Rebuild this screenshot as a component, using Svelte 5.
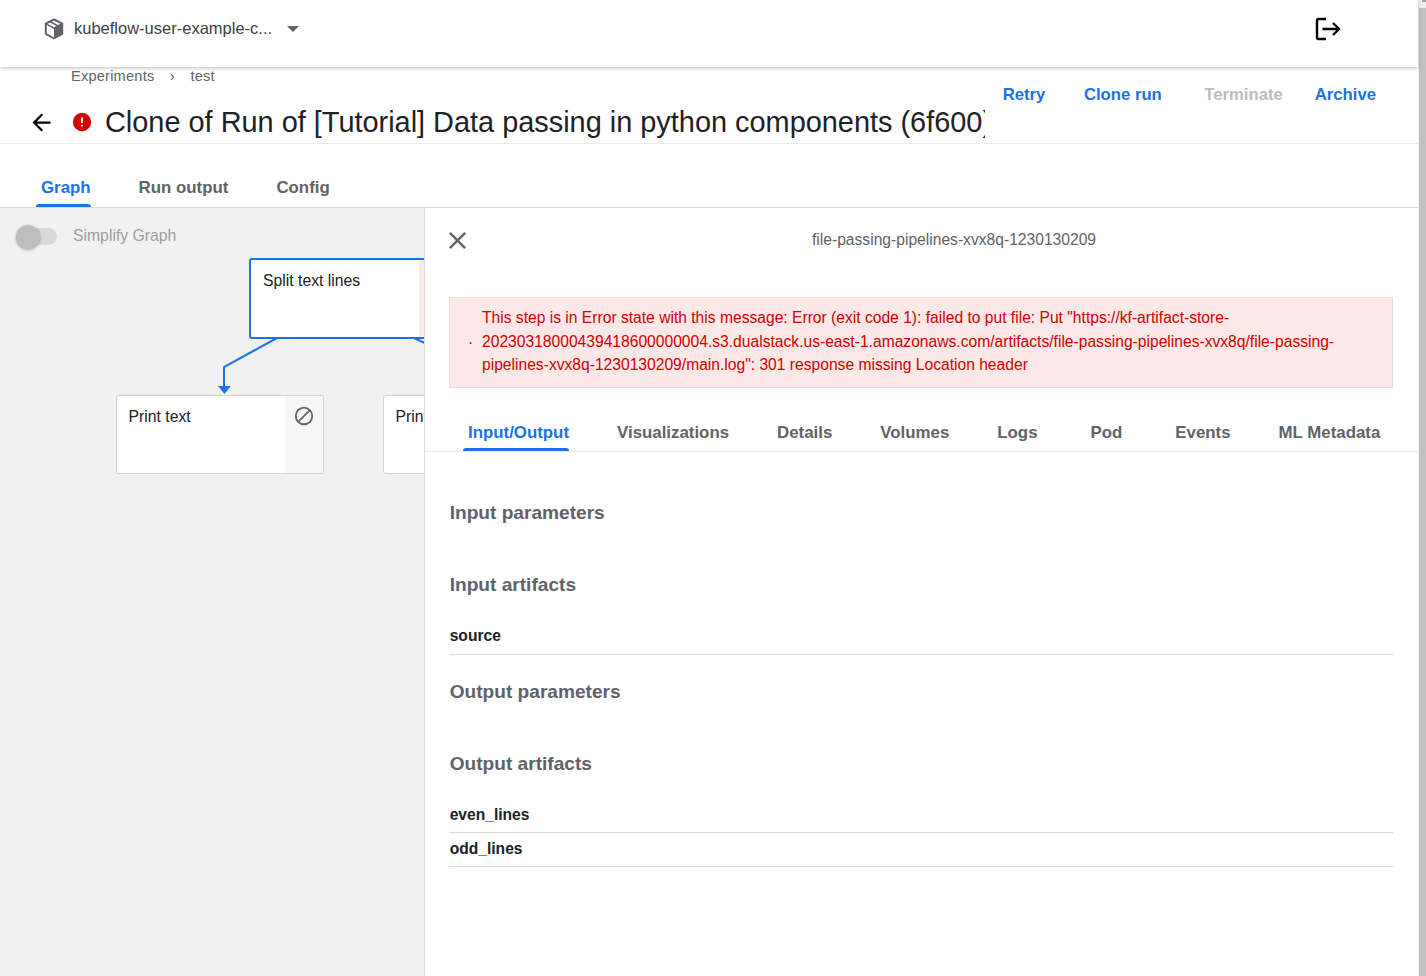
<script>
  const crumbs = ["Experiments", "test"];
  const actions = [
    { label: "Retry" },
    { label: "Clone run" },
    { label: "Terminate", disabled: true },
    { label: "Archive" },
  ];
  const runTabs = ["Graph", "Run output", "Config"];
  const sideTabs = ["Input/Output", "Visualizations", "Details", "Volumes", "Logs", "Pod", "Events", "ML Metadata"];
  const title = "Clone of Run of [Tutorial] Data passing in python components (6f600)";
  const message =
    'This step is in Error state with this message: Error (exit code 1): failed to put file: Put "https://kf-artifact-store-20230318000439418600000004.s3.dualstack.us-east-1.amazonaws.com/artifacts/file-passing-pipelines-xvx8q/file-passing-pipelines-xvx8q-1230130209/main.log": 301 response missing Location header';
</script>

<div class="page">
  <header class="topbar">
    <div class="namespace">
      <svg class="cube" viewBox="0 0 24 24" width="24" height="24">
        <path d="M12 2.500 3.800 6.600v10.200L12 21.500l8.200-4.700V6.600z" fill="none" stroke="#5f6368" stroke-width="2" stroke-linejoin="round" />
        <path d="M12 11.200v10.300l8.200-4.700V6.600z" fill="#5f6368" />
        <path d="M3.800 6.600 12 11.200l8.200-4.600M8 4.600l8.200 4.400v3.400" fill="none" stroke="#5f6368" stroke-width="1.600" />
      </svg>
      <span class="ns-name">kubeflow-user-example-c...</span>
      <span class="caret"></span>
    </div>
    <svg class="logout" viewBox="0 0 26 24" width="26" height="24">
      <path d="M11 2H3.500A1.500 1.500 0 0 0 2 3.500v17A1.500 1.500 0 0 0 3.500 22H11" fill="none" stroke="#000" stroke-width="2.400" />
      <path d="M7.500 12H24M18 6l6 6-6 6" fill="none" stroke="#000" stroke-width="2.400" />
    </svg>
  </header>

  <section class="run-head">
    <div class="head-left">
      <nav class="crumbs">
        {#each crumbs as crumb, i}
          {#if i > 0}<span class="chev">›</span>{/if}
          <span>{crumb}</span>
        {/each}
      </nav>
      <div class="title-row">
        <svg class="back" viewBox="0 0 24 24" width="27" height="27">
          <path d="M20 11H7.830l5.590-5.590L12 4l-8 8 8 8 1.410-1.410L7.830 13H20z" fill="#000" />
        </svg>
        <svg class="status" viewBox="0 0 24 24" width="22" height="22">
          <path d="M12 2a10 10 0 1 0 0 20 10 10 0 0 0 0-20zm1 15h-2v-2h2zm0-4h-2V7h2z" fill="#d50000" />
        </svg>
        <h1>{title}</h1>
      </div>
    </div>
    <div class="actions">
      {#each actions as action}
        <button class="action" class:disabled={action.disabled}>{action.label}</button>
      {/each}
    </div>
  </section>

  <nav class="run-tabs">
    {#each runTabs as tab, i}
      <div class="tab" class:active={i === 0}>{tab}</div>
    {/each}
  </nav>

  <main class="body">
    <section class="graph">
      <div class="simplify">
        <span class="switch"><span class="knob"></span></span>
        <span class="simplify-label">Simplify Graph</span>
      </div>

      <div class="node selected" style="left: 249px; top: 50px; width: 202px; height: 81px;">
        <span class="node-name">Split text lines</span>
        <span class="node-status red"></span>
      </div>
      <div class="node" style="left: 116px; top: 187px; width: 208px; height: 79px;">
        <span class="node-name">Print text</span>
        <span class="node-status">
          <svg viewBox="0 0 24 24" width="22" height="22">
            <path d="M12 2a10 10 0 1 0 0 20 10 10 0 0 0 0-20zM4 12a8 8 0 0 1 12.900-6.300L5.700 16.900A7.900 7.900 0 0 1 4 12zm8 8a7.900 7.900 0 0 1-4.900-1.700L18.300 7.100A8 8 0 0 1 12 20z" fill="#5f6368" />
          </svg>
        </span>
      </div>
      <div class="node" style="left: 383px; top: 187px; width: 208px; height: 79px;">
        <span class="node-name">Print text</span>
      </div>

      <svg class="edges" width="424" height="768" viewBox="0 0 424 768">
        <path d="M277 130 224 159V180" fill="none" stroke="#1a73e8" stroke-width="2" />
        <path d="M218 178H231L224.500 186z" fill="#1a73e8" />
        <path d="M414 130 425 135" fill="none" stroke="#1a73e8" stroke-width="2" />
      </svg>
    </section>

    <aside class="panel">
      <div class="panel-head">
        <svg class="close" viewBox="0 0 24 24" width="29" height="29">
          <path d="M19 6.410 17.590 5 12 10.590 6.410 5 5 6.410 10.590 12 5 17.590 6.410 19 12 13.410 17.590 19 19 17.590 13.410 12z" fill="#5f6368" />
        </svg>
        <span class="node-id">file-passing-pipelines-xvx8q-1230130209</span>
      </div>

      <div class="banner">
        <span class="dot">·</span>
        <p>{message}</p>
      </div>

      <nav class="side-tabs">
        {#each sideTabs as tab, i}
          <div class="tab" class:active={i === 0}>{tab}</div>
        {/each}
      </nav>

      <div class="io">
        <h2 style="margin-top: 49px;">Input parameters</h2>
        <h2 style="margin-top: 49px;">Input artifacts</h2>
        <div class="io-row tight" style="margin-top: 25px;">source</div>
        <h2 style="margin-top: 25px;">Output parameters</h2>
        <h2 style="margin-top: 49px;">Output artifacts</h2>
        <div class="io-row" style="margin-top: 24px;">even_lines</div>
        <div class="io-row">odd_lines</div>
      </div>
    </aside>
  </main>

  <div class="scrollbar"><span class="arrow"></span><span class="thumb"></span></div>
</div>

<style>
  :global(body) {
    margin: 0;
    overflow: hidden;
    font-family: "Liberation Sans", Arial, sans-serif;
  }

  .page {
    position: relative;
    width: 1426px;
    height: 976px;
    padding-right: 8px;
    box-sizing: border-box;
    background: #fff;
    overflow: hidden;
  }

  .topbar {
    height: 67px;
    display: flex;
    align-items: center;
    justify-content: space-between;
    padding: 0 77px 10px 42px;
    box-sizing: border-box;
    position: relative;
    z-index: 1;
    box-shadow: 0 1px 4px rgba(0, 0, 0, 0.25);
    background: #fff;
  }

  .namespace {
    display: flex;
    align-items: center;
    color: #3c4043;
    font-size: 16.500px;
  }

  .ns-name {
    margin-left: 8px;
  }

  .caret {
    margin-left: 15px;
    border-left: 6.500px solid transparent;
    border-right: 6.500px solid transparent;
    border-top: 6.500px solid #5f6368;
  }

  .run-head {
    height: 77px;
    display: flex;
    justify-content: space-between;
    border-bottom: 1px solid #e8eaed;
    box-sizing: border-box;
  }

  .head-left {
    width: 985px;
    overflow: hidden;
  }

  .crumbs {
    display: flex;
    align-items: center;
    height: 18px;
    margin-left: 71px;
    font-size: 14.625px;
    letter-spacing: 0.200px;
    color: #5f6368;
  }

  .chev {
    margin: 0 15.500px;
  }

  .title-row {
    display: flex;
    align-items: center;
    height: 36px;
    margin-top: 19px;
    padding-left: 28px;
    white-space: nowrap;
  }

  .status {
    margin-left: 16px;
    flex: none;
  }

  .back {
    flex: none;
  }

  h1 {
    margin: 0 0 0 12px;
    font-size: 28.900px;
    font-weight: 400;
    color: #202124;
  }

  .actions {
    display: flex;
    padding: 18px 42px 0 0;
    align-items: flex-start;
  }

  .action {
    border: none;
    background: none;
    padding: 0;
    font: bold 16.700px "Liberation Sans", Arial, sans-serif;
    color: #1a73e8;
    line-height: 20px;
  }

  .action:nth-child(2) {
    margin-left: 38.500px;
  }

  .action:nth-child(3) {
    margin-left: 42.500px;
  }

  .action:nth-child(4) {
    margin-left: 32px;
  }

  .action.disabled {
    color: #bdbdbd;
  }

  .run-tabs {
    display: flex;
    height: 63px;
    padding-left: 36px;
    gap: 38px;
    box-sizing: border-box;
    align-items: flex-end;
  }

  .tab {
    position: relative;
    padding: 0 5px 8px;
    font-size: 16.850px;
    font-weight: bold;
    color: #5f6368;
    line-height: 22px;
    white-space: nowrap;
  }

  .tab.active {
    color: #1a73e8;
  }

  .tab.active::after {
    content: "";
    position: absolute;
    left: 0;
    right: 5px;
    bottom: 0;
    height: 3px;
    border-radius: 3px 3px 0 0;
    background: #1a73e8;
  }

  .body {
    display: flex;
    height: 769px;
    border-top: 1px solid #dadce0;
    box-sizing: border-box;
  }

  .graph {
    position: relative;
    width: 424px;
    flex: none;
    background: #f1f1f1;
    overflow: hidden;
  }

  .simplify {
    display: flex;
    align-items: center;
    gap: 16px;
    padding: 17px 0 0 16px;
    color: #9e9e9e;
    font-size: 15.750px;
    line-height: 24px;
  }

  .simplify-label {
    margin-top: -1px;
  }

  .switch {
    position: relative;
    display: block;
    width: 41px;
    height: 17px;
    border-radius: 9px;
    background: #d9d9d9;
  }

  .knob {
    position: absolute;
    left: 0;
    top: -3.500px;
    width: 24px;
    height: 24px;
    border-radius: 50%;
    background: #bdbdbd;
    box-shadow: 0 1px 3px rgba(0, 0, 0, 0.3);
  }

  .node {
    position: absolute;
    display: flex;
    justify-content: space-between;
    box-sizing: border-box;
    background: #fff;
    border: 1px solid #d2d2d2;
    border-radius: 3px;
    overflow: hidden;
    color: #202124;
    font-size: 15.750px;
  }

  .node.selected {
    border: 2px solid #1a73e8;
  }

  .node-name {
    padding: 12px 11.500px;
  }

  .node.selected .node-name {
    padding: 12px;
  }

  .node-status {
    width: 38px;
    background: #f7f7f7;
    display: flex;
    justify-content: center;
    padding-top: 9px;
    box-sizing: border-box;
  }

  .node-status.red {
    background: #fbe9e7;
    width: 30px;
  }

  .edges {
    position: absolute;
    left: 0;
    top: 0;
  }

  .panel {
    flex: 1;
    border-left: 1px solid #dadce0;
    background: #fff;
    position: relative;
    box-sizing: border-box;
  }

  .panel-head {
    display: flex;
    align-items: center;
    height: 64px;
    position: relative;
    padding-left: 17.500px;
    box-sizing: border-box;
  }

  .node-id {
    position: absolute;
    left: 387px;
    top: 23px;
    font-size: 15.630px;
    color: #5f6368;
  }

  .banner {
    display: flex;
    margin: 25px 25px 0 24px;
    height: 91px;
    box-sizing: border-box;
    padding: 8px 0 0 18px;
    background: #fbe8e7;
    border: 1px solid #e6dcdc;
    color: #d50000;
    font-size: 15.630px;
    line-height: 23.500px;
  }

  .dot {
    width: 14px;
    flex: none;
    align-self: center;
    margin-bottom: 8px;
  }

  .banner p {
    margin: 0;
    width: 870px;
  }

  .side-tabs {
    display: flex;
    height: 64px;
    padding-left: 38px;
    gap: 38px;
    align-items: flex-end;
    border-bottom: 1px solid #e8eaed;
    box-sizing: border-box;
  }

  .side-tabs .tab {
    padding-bottom: 0;
    height: 31px;
    line-height: 26px;
  }

  .side-tabs .tab:nth-child(6),
  .side-tabs .tab:nth-child(7) {
    margin-left: 5px;
  }

  .io {
    padding: 0 25px 0 24px;
  }

  h2 {
    margin: 0;
    padding-left: 0.700px;
    font-size: 19.125px;
    line-height: 23px;
    font-weight: bold;
    color: #5f6368;
  }

  .io-row {
    height: 34px;
    padding-left: 0.700px;
    line-height: 31px;
    box-sizing: border-box;
    font-size: 15.600px;
    font-weight: bold;
    color: #202124;
    border-bottom: 1px solid #dadce0;
  }

  .io-row.tight {
    line-height: 29px;
  }

  .scrollbar {
    position: absolute;
    right: 0;
    top: 0;
    width: 8px;
    height: 976px;
    background: #f1f1f1;
  }

  .arrow {
    display: block;
    position: absolute;
    top: 0;
    left: 4px;
    width: 4px;
    height: 2px;
    background: #a3a3a3;
  }

  .thumb {
    display: block;
    margin: 8px 0 0 1px;
    width: 7px;
    height: 968px;
    background: #c1c1c1;
  }
</style>
